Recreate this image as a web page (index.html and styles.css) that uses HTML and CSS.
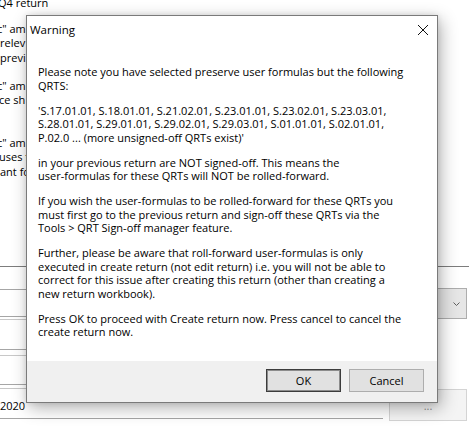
FILE: index.html
```html
<!DOCTYPE html>
<html lang="en">
<head>
<meta charset="utf-8">
<title>Warning</title>
<link rel="stylesheet" href="styles.css">
</head>
<body>
<div class="app">
  <div class="notes">
    <div class="note-group first">
      <div class="ln cut2">Q4 return</div>
    </div>
    <div class="note-group clip g-a">
      <div class="ln cut3">c" am</div>
      <div class="ln">relev</div>
      <div class="ln">previ</div>
    </div>
    <div class="note-group clip g-b">
      <div class="ln cut3">c" am</div>
      <div class="ln cut1">ce sh</div>
    </div>
    <div class="note-group clip g-c">
      <div class="ln cut3">c" am</div>
      <div class="ln cut1">uses f</div>
      <div class="ln">ant fo</div>
    </div>
  </div>

  <div class="form">
    <div class="rule"></div>
    <div class="form-grid">
      <div class="col-left">
        <div class="row r1"></div>
        <div class="row r2"></div>
        <div class="row r3"></div>
        <div class="row r4"></div>
        <div class="row r5"></div>
        <div class="row r6"></div>
        <div class="textbox">2020</div>
      </div>
      <div class="col-right">
        <div class="combo">
          <svg class="chev" width="7" height="4" viewBox="0 0 7 4"><path d="M0.5 0.5 L3.5 3.5 L6.5 0.5" fill="none" stroke="#606060" stroke-width="1"/></svg>
        </div>
        <div class="browse">...</div>
      </div>
    </div>
  </div>
</div>

<div class="dialog" role="dialog" aria-label="Warning">
  <div class="titlebar">
    <span class="title">Warning</span>
    <span class="close" aria-label="Close">
      <svg width="10" height="10" viewBox="0 0 10 10"><path d="M0 0 L10 10 M10 0 L0 10" stroke="#111" stroke-width="1" fill="none"/></svg>
    </span>
  </div>
  <div class="msg">
    <p>Please note you have selected preserve user formulas but the following<br>QRTS:</p>
    <p>'S.17.01.01, S.18.01.01, S.21.02.01, S.23.01.01, S.23.02.01, S.23.03.01,<br>S.28.01.01, S.29.01.01, S.29.02.01, S.29.03.01, S.01.01.01, S.02.01.01,<br>P.02.0 ... (more unsigned-off QRTs exist)'</p>
    <p>in your previous return are NOT signed-off. This means the<br>user-formulas for these QRTs will NOT be rolled-forward.</p>
    <p>If you wish the user-formulas to be rolled-forward for these QRTs you<br>must first go to the previous return and sign-off these QRTs via the<br>Tools &gt; QRT Sign-off manager feature.</p>
    <p>Further, please be aware that roll-forward user-formulas is only<br>executed in create return (not edit return) i.e. you will not be able to<br>correct for this issue after creating this return (other than creating a<br>new return workbook).</p>
    <p>Press OK to proceed with Create return now. Press cancel to cancel the<br>create return now.</p>
  </div>
  <div class="footer">
    <button class="btn btn-default">OK</button>
    <button class="btn">Cancel</button>
  </div>
</div>
</body>
</html>
```
FILE: styles.css
```css
html, body {
  margin: 0;
  padding: 0;
}
body {
  width: 469px;
  height: 428px;
  overflow: hidden;
  background: #ffffff;
  font-family: "Open Sans", "Noto Sans", sans-serif;
  font-size: 11px;
  color: #000;
  position: relative;
}

/* ---------- background application ---------- */
.app {
  width: 469px;
  height: 428px;
  overflow: hidden;
}
.notes {
  margin-top: -4.25px;
  line-height: 14.5px;
  white-space: nowrap;
}
.note-group.clip {
  width: 26px;
  overflow: hidden;
}
.note-group.g-a { margin-top: 11.5px; }
.note-group.g-b { margin-top: 13.5px; }
.note-group.g-c { margin-top: 28px; }
.ln.cut1 { margin-left: -1px; }
.ln.cut2 { margin-left: -2px; }
.ln.cut3 { margin-left: -3px; }

.form {
  margin-top: 86.75px;
}
.rule {
  height: 0;
  border-top: 1px solid #7d7d7d;
}
.form-grid {
  display: grid;
  grid-template-columns: 383px 78px;
  column-gap: 6px;
}
.col-left .row {
  border-bottom: 1px solid #a6a6a6;
}
.col-left .r1 { height: 22px; }
.col-left .r2 { height: 26px; }
.col-left .r3 { height: 2px; border-bottom-color: #c8c8c8; }
.col-left .r4 { height: 29px; }
.col-left .r5 { height: 5px; border-bottom-color: #c8c8c8; }
.col-left .r6 { height: 28px; }
.textbox {
  margin-top: 3px;
  height: 31px;
  border-top: 1px solid #c6c6c6;
  border-bottom: 1px solid #a6a6a6;
  box-sizing: border-box;
  line-height: 29px;
  padding-top: 2px;
  font-size: 11px;
}
.combo {
  margin-top: 21px;
  height: 31px;
  box-sizing: border-box;
  border: 1px solid #adadad;
  background: #e6e6e6;
  display: flex;
  align-items: center;
  justify-content: flex-end;
  padding-right: 6px;
}
.browse {
  margin-top: 70px;
  height: 32px;
  box-sizing: border-box;
  border: 1px solid #d4d4d4;
  background: #f4f4f4;
  color: #8a8a8a;
  display: flex;
  align-items: center;
  justify-content: center;
  font-size: 11px;
  line-height: 1;
}

/* ---------- dialog ---------- */
.dialog {
  position: absolute;
  left: 26px;
  top: 15px;
  width: 412px;
  height: 388px;
  box-sizing: border-box;
  border: 1px solid #7a7a7a;
  background: #ffffff;
  display: flex;
  flex-direction: column;
  box-shadow: 3px 5px 16px rgba(0, 0, 0, 0.30), 0 0 6px rgba(0, 0, 0, 0.10);
}
.titlebar {
  height: 26px;
  display: flex;
  align-items: center;
  justify-content: space-between;
  padding-left: 3px;
}
.title {
  font-size: 11.5px;
  line-height: 14px;
  padding-top: 1px;
}
.close {
  width: 28px;
  height: 26px;
  display: flex;
  align-items: center;
  justify-content: center;
  padding-top: 1px;
}
.close svg { display: block; }
.msg {
  flex: 1;
  padding: 23px 0 0 11px;
  line-height: 13.5px;
  white-space: nowrap;
}
.msg p {
  margin: 0 0 11.5px 0;
}
.footer {
  height: 41px;
  background: #f0f0f0;
  display: flex;
  justify-content: flex-end;
  align-items: flex-start;
  gap: 8px;
  padding: 8px 13px 0 0;
  box-sizing: border-box;
}
.btn {
  width: 75px;
  height: 23px;
  box-sizing: border-box;
  border: 1px solid #adadad;
  background: #e1e1e1;
  font-family: "Open Sans", "Noto Sans", sans-serif;
  font-size: 11px;
  color: #000;
  padding: 0;
  margin: 0;
  line-height: 20px;
}
.btn-default {
  border: 1px solid #3c3c3c;
  box-shadow: inset 0 0 0 1px #8c8c8c;
}
```
